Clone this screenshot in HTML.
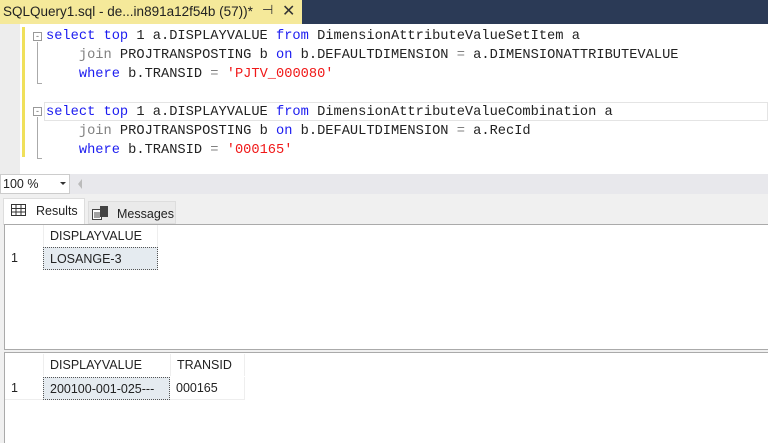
<!DOCTYPE html>
<html><head><meta charset="utf-8"><style>
*{margin:0;padding:0;box-sizing:border-box}
body{width:768px;height:443px;overflow:hidden;background:#f0f0f0;position:relative;font-family:"Liberation Sans",sans-serif}
.abs{position:absolute}
.code{font-family:"Liberation Mono",monospace;font-size:13.7px;white-space:pre;color:#222;line-height:19px}
.k{color:#1c1cf0}.g{color:#808080}.s{color:#f01818}
.cell{position:absolute;font-size:12.5px;color:#222;padding-left:6px;line-height:22px;white-space:nowrap}
</style></head><body>
<div class="abs" style="left:0;top:0;width:768px;height:24px;background:#2b3a56"></div>
<div class="abs" style="left:0;top:0;width:302px;height:24px;background:#f5e99a;font-size:13.5px;color:#222;line-height:24px;padding-left:3px">SQLQuery1.sql - de...in891a12f54b (57))*</div>
<div class="abs" style="left:262px;top:2px;font-size:13px;color:#333">⊣</div>
<div class="abs" style="left:282px;top:1px;font-size:16px;color:#333">✕</div>
<div class="abs" style="left:0;top:24px;width:768px;height:150px;background:#fff"></div>
<div class="abs" style="left:0;top:24px;width:20px;height:150px;background:#ededed"></div>
<div class="abs" style="left:22px;top:27px;width:3px;height:130px;background:#f0e05a"></div>
<div class="abs" style="left:44px;top:102px;width:724px;height:19px;border:1px solid #e4e4e4"></div>
<div class="abs" style="left:33px;top:32px;width:9px;height:9px;border:1px solid #999;font-size:9px;line-height:6px;text-align:center;color:#666">-</div>
<div class="abs" style="left:37px;top:42px;width:1px;height:42px;background:#aaa"></div>
<div class="abs" style="left:37px;top:83px;width:5px;height:1px;background:#aaa"></div>
<div class="abs" style="left:33px;top:107px;width:9px;height:9px;border:1px solid #999;font-size:9px;line-height:6px;text-align:center;color:#666">-</div>
<div class="abs" style="left:37px;top:117px;width:1px;height:42px;background:#aaa"></div>
<div class="abs" style="left:37px;top:158px;width:5px;height:1px;background:#aaa"></div>
<div class="abs code" style="left:46px;top:27px"><span class="k">select top</span> 1 a.DISPLAYVALUE <span class="k">from</span> DimensionAttributeValueSetItem a
    <span class="g">join</span> PROJTRANSPOSTING b <span class="k">on</span> b.DEFAULTDIMENSION <span class="g">=</span> a.DIMENSIONATTRIBUTEVALUE
    <span class="k">where</span> b.TRANSID <span class="g">=</span> <span class="s">'PJTV_000080'</span>

<span class="k">select top</span> 1 a.DISPLAYVALUE <span class="k">from</span> DimensionAttributeValueCombination a
    <span class="g">join</span> PROJTRANSPOSTING b <span class="k">on</span> b.DEFAULTDIMENSION <span class="g">=</span> a.RecId
    <span class="k">where</span> b.TRANSID <span class="g">=</span> <span class="s">'000165'</span></div>
<div class="abs" style="left:0;top:174px;width:768px;height:20px;background:#e8e8ec"></div>
<div class="abs" style="left:0;top:174px;width:70px;height:20px;background:#fff;border:1px solid #ccc;font-size:12.5px;line-height:18px;padding-left:2px;color:#222">100 %</div>
<div class="abs" style="left:60px;top:182px;border-left:3px solid transparent;border-right:3px solid transparent;border-top:3px solid #333"></div>
<div class="abs" style="left:78px;top:179px;border-top:5px solid transparent;border-bottom:5px solid transparent;border-right:4px solid #bbb"></div>
<div class="abs" style="left:3px;top:198px;width:82px;height:27px;background:#fff;border:1px solid #ddd;border-bottom:none;font-size:12.5px;line-height:24px;padding-left:32px;color:#222">Results</div>
<svg class="abs" style="left:11px;top:204px" width="16" height="13"><rect x="0.5" y="0.5" width="14" height="11" fill="#fff" stroke="#333"/><path d="M0 4.5H15M0 8H15M5 0V12M10 0V12" stroke="#333"/></svg>
<div class="abs" style="left:88px;top:201px;width:88px;height:23px;background:#eaeaea;border:1px solid #ddd;font-size:12.5px;line-height:24px;padding-left:28px;color:#222">Messages</div>
<svg class="abs" style="left:92px;top:205px" width="18" height="16"><rect x="0.5" y="4.5" width="9" height="10" fill="#fff" stroke="#444"/><rect x="8" y="1" width="8" height="11" fill="#444"/><path d="M2 8H8M2 10H8M2 12H8" stroke="#444"/></svg>
<div class="abs" style="left:4px;top:224px;width:764px;height:126px;background:#fff;border:1px solid #aaa;border-right:none"></div>
<div class="abs" style="left:5px;top:225px;width:153px;height:45px;border-right:1px solid #eee"></div>
<div class="cell" style="left:43px;top:225px;width:115px;height:22px;border-left:1px solid #eee">DISPLAYVALUE</div>
<div class="cell" style="left:5px;top:247px;width:38px;color:#222">1</div>
<div class="cell" style="left:43px;top:247px;width:115px;height:23px;background:#e5ebf0;border:1px dotted #555">LOSANGE-3</div>
<div class="abs" style="left:4px;top:352px;width:764px;height:91px;background:#fff;border:1px solid #aaa;border-right:none;border-bottom:none"></div>
<div class="cell" style="left:43px;top:354px;width:127px;height:22px;border-left:1px solid #eee">DISPLAYVALUE</div>
<div class="cell" style="left:170px;top:354px;width:75px;height:22px;border-left:1px solid #eee;border-right:1px solid #eee">TRANSID</div>
<div class="cell" style="left:5px;top:377px;width:38px;border-bottom:1px solid #eee">1</div>
<div class="cell" style="left:43px;top:377px;width:127px;height:23px;background:#e5ebf0;border:1px dotted #555">200100-001-025---</div>
<div class="cell" style="left:170px;top:377px;width:75px;height:23px;border-right:1px solid #eee;border-bottom:1px solid #eee">000165</div>
</body></html>
